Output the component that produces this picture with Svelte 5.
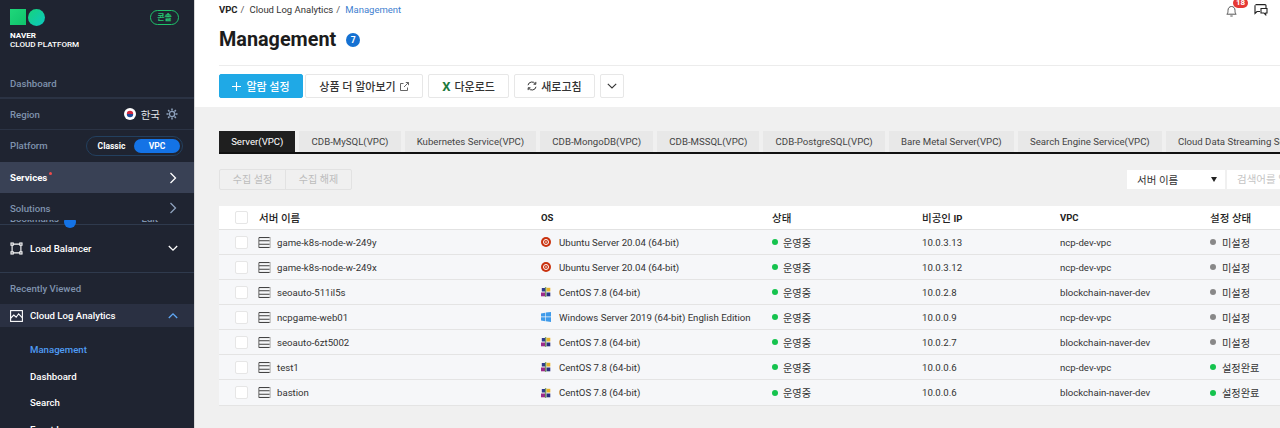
<script lang="ts">
  const tabs = [
    'Server(VPC)', 'CDB-MySQL(VPC)', 'Kubernetes Service(VPC)', 'CDB-MongoDB(VPC)', 'CDB-MSSQL(VPC)',
    'CDB-PostgreSQL(VPC)', 'Bare Metal Server(VPC)', 'Search Engine Service(VPC)', 'Cloud Data Streaming Service(VPC)'
  ];

  const ubuntu = 'Ubuntu Server 20.04 (64-bit)';
  const centos = 'CentOS 7.8 (64-bit)';
  const windows = 'Windows Server 2019 (64-bit) English Edition';

  const servers = [
    { name: 'game-k8s-node-w-249y', icon: 'ubuntu', os: ubuntu, ip: '10.0.3.13', vpc: 'ncp-dev-vpc', done: false },
    { name: 'game-k8s-node-w-249x', icon: 'ubuntu', os: ubuntu, ip: '10.0.3.12', vpc: 'ncp-dev-vpc', done: false },
    { name: 'seoauto-511il5s', icon: 'centos', os: centos, ip: '10.0.2.8', vpc: 'blockchain-naver-dev', done: false },
    { name: 'ncpgame-web01', icon: 'windows', os: windows, ip: '10.0.0.9', vpc: 'ncp-dev-vpc', done: false },
    { name: 'seoauto-6zt5002', icon: 'centos', os: centos, ip: '10.0.2.7', vpc: 'blockchain-naver-dev', done: false },
    { name: 'test1', icon: 'centos', os: centos, ip: '10.0.0.6', vpc: 'ncp-dev-vpc', done: true },
    { name: 'bastion', icon: 'centos', os: centos, ip: '10.0.0.6', vpc: 'blockchain-naver-dev', done: true }
  ];
</script>

<div class="page">
  <aside class="sidebar">
    <div class="brand">
      <div class="brand-top">
        <div class="logo">
          <span class="logo-square"></span>
          <span class="logo-circle"></span>
        </div>
        <span class="pill">콘솔</span>
      </div>
      <div class="brand-name"><b>NAVER</b><br />CLOUD PLATFORM</div>
    </div>

    <div class="side-row dash">Dashboard</div>
    <div class="side-row region">
      <span>Region</span>
      <span class="region-value">
        <svg width="12" height="12" viewBox="0 0 12 12">
          <circle cx="6" cy="6" r="6" fill="#fff" />
          <path d="M2.8 6a3.2 3.2 0 0 1 6.4 0z" fill="#d0263c" />
          <path d="M2.8 6a3.2 3.2 0 0 0 6.4 0z" fill="#1d4a98" />
        </svg>
        <span class="ko">한국</span>
        <svg class="gear" width="12" height="12" viewBox="0 0 12 12" fill="none" stroke="#8ea2bd">
          <circle cx="6" cy="6" r="2.600" stroke-width="1.300" />
          <path stroke-width="1.500" d="M6 .5v2M6 9.500v2M.5 6h2M9.500 6h2M2.100 2.100l1.400 1.400M8.500 8.500l1.400 1.400M2.100 9.900l1.400-1.400M8.500 3.500l1.400-1.400" />
        </svg>
      </span>
    </div>
    <div class="side-row platform">
      <span>Platform</span>
      <span class="switch">
        <span class="opt">Classic</span>
        <span class="opt on">VPC</span>
      </span>
    </div>
    <div class="side-row services">
      <span class="dotted">Services</span>
      <svg width="8" height="12" viewBox="0 0 8 12" fill="none" stroke="#fff" stroke-width="1.3"><path d="M1.5 1l5 5-5 5" /></svg>
    </div>
    <div class="side-row solutions">
      <span>Solutions</span>
      <svg width="8" height="12" viewBox="0 0 8 12" fill="none" stroke="#8ea2bd" stroke-width="1.3"><path d="M1.5 1l5 5-5 5" /></svg>
    </div>

    <div class="side-scroll">
      <div class="side-row bookmarks">
        <span class="bm-label"><span class="bm-text">Bookmarks</span><i class="bm-count"></i></span>
        <span class="bm-text">Edit</span>
      </div>
      <div class="menu-row lb">
        <svg width="13" height="13" viewBox="0 0 13 13" fill="none" stroke="#fff" stroke-width="1.1">
          <rect x="1" y="1" width="2.2" height="2.2" />
          <rect x="9.8" y="1" width="2.2" height="2.2" />
          <rect x="1" y="9.8" width="2.2" height="2.2" />
          <rect x="9.8" y="9.8" width="2.2" height="2.2" />
          <path d="M3.2 2.1h6.6M3.2 10.9h6.6M2.1 3.2v6.6M10.9 3.2v6.6" />
        </svg>
        <span class="menu-label">Load Balancer</span>
        <svg width="10" height="7" viewBox="0 0 10 7" fill="none" stroke="#fff" stroke-width="1.3"><path d="M.8 1l4.2 4.2L9.2 1" /></svg>
      </div>
      <div class="recent">Recently Viewed</div>
      <div class="menu-row current">
        <svg width="13" height="12" viewBox="0 0 13 12" fill="none" stroke="#fff" stroke-width="1.1">
          <rect x=".6" y=".6" width="11.8" height="10.8" />
          <path d="M.8 8l3-3 2.4 2.2 2.4-3.4 3.6 3.8" />
        </svg>
        <span class="menu-label">Cloud Log Analytics</span>
        <svg width="10" height="7" viewBox="0 0 10 7" fill="none" stroke="#5fa8f5" stroke-width="1.3"><path d="M.8 6L5 1.800 9.200 6" /></svg>
      </div>
      <div class="sub active">Management</div>
      <div class="sub">Dashboard</div>
      <div class="sub">Search</div>
      <div class="sub">Event Logs</div>
    </div>
  </aside>

  <main class="main">
    <header class="head">
      <div class="crumb-bar">
        <div class="crumbs">
          <b>VPC</b><span class="sep">/</span><span>Cloud Log Analytics</span><span class="sep">/</span><span class="now">Management</span>
        </div>
        <div class="top-icons">
          <span class="bell">
            <svg width="11" height="12" viewBox="0 0 11 12" fill="none" stroke="#555" stroke-width="1">
              <path d="M.8 9.200c1-.8 1.200-2 1.200-3.800C2 3 3.500 1.500 5.500 1.500S9 3 9 5.400c0 1.800.2 3 1.200 3.800z" />
              <path d="M4.300 11h2.400" />
            </svg>
            <span class="count">18</span>
          </span>
          <svg width="14" height="12" viewBox="0 0 14 12" fill="none" stroke="#222" stroke-width="1.100">
            <path d="M1.500.6h9.500a1 1 0 0 1 1 1V4M6 7.500H3L1 9.500V1.200" />
            <path d="M7 4.500h6v4.500h-1.300v1.800L10 9H7z" />
          </svg>
        </div>
      </div>
      <div class="title-row">
        <h1>Management</h1>
        <span class="badge">7</span>
      </div>
      <div class="actions">
        <button class="btn primary">
          <svg width="9" height="9" viewBox="0 0 9 9" stroke="#fff" stroke-width="1.1"><path d="M4.500 0v9M0 4.500h9" /></svg>
          알람 설정
        </button>
        <button class="btn learn">
          상품 더 알아보기
          <svg width="9" height="9" viewBox="0 0 9 9" fill="none" stroke="#555" stroke-width=".9"><path d="M7.500 5.500v3H.5v-7h3M4 5l4.400-4.400M5.800.5h2.700v2.700" /></svg>
        </button>
        <button class="btn dl">
          <span class="xl">X</span>
          다운로드
        </button>
        <button class="btn refresh">
          <svg width="10" height="10" viewBox="0 0 10 10" fill="none" stroke="#333" stroke-width="1"><path d="M1 4.200A4 4 0 0 1 8.400 3M9 5.800A4 4 0 0 1 1.600 7" /><path d="M8.800 .9v2.300H6.500M1.200 9.100V6.800h2.300" /></svg>
          새로고침
        </button>
        <button class="btn more" aria-label="more">
          <svg width="10" height="6" viewBox="0 0 10 6" fill="none" stroke="#333" stroke-width="1.100"><path d="M.8.8L5 5l4.200-4.200" /></svg>
        </button>
      </div>
    </header>

    <section class="content">
      <div class="tabs">
        {#each tabs as tab, i}
          <div class="tab" class:selected={i === 0}>{tab}</div>
        {/each}
      </div>

      <div class="toolbar">
        <div class="collect">
          <span>수집 설정</span>
          <span>수집 해제</span>
        </div>
        <div class="search">
          <div class="select">서버 이름<i class="caret"></i></div>
          <div class="input">검색어를 입력하세요</div>
        </div>
      </div>

      <div class="table">
        <div class="tr th">
          <span class="check"></span>
          <span>서버 이름</span>
          <span class="lat">OS</span>
          <span>상태</span>
          <span>비공인 <span class="lat">IP</span></span>
          <span class="lat">VPC</span>
          <span>설정 상태</span>
        </div>
        {#each servers as s}
          <div class="tr">
            <span class="check"></span>
            <span class="name">
              <svg width="13" height="11" viewBox="0 0 13 11">
                <rect width="13" height="11" fill="#c9c9c9" />
                <path d="M1 .5h10.500M1 3.800h10.500M1 7.200h10.500M1 10.500h10.500" stroke="#444" stroke-width="1" />
                <path d="M1 1v9.500" stroke="#666" stroke-width="1" />
                <path d="M1.500 2.200h10M1.500 5.500h10M1.500 8.800h10" stroke="#f6f7f9" stroke-width="1.800" />
              </svg>
              {s.name}
            </span>
            <span class="os">
              {#if s.icon === 'ubuntu'}
                <svg width="10" height="10" viewBox="0 0 10 10">
                  <circle cx="5" cy="5" r="5" fill="#c9320f" />
                  <circle cx="5" cy="5" r="2.500" fill="none" stroke="#fff" stroke-width="1" />
                  <circle cx="5" cy="5" r=".8" fill="#fff" />
                </svg>
              {:else if s.icon === 'centos'}
                <svg width="10" height="10" viewBox="0 0 10 10">
                  <rect x="0" y="5.500" width="4.300" height="3.800" fill="#9c2a8a" />
                  <rect x="5.500" y="5.500" width="3.800" height="3.800" fill="#2a2f80" />
                  <rect x=".8" y="1" width="3.500" height="3.500" fill="#2f3a8c" />
                  <rect x="5.500" y=".8" width="3.800" height="3.700" fill="#e8b32a" />
                  <rect x="3.900" y="0" width="1.400" height="10" fill="#3d7a2c" opacity=".65" />
                </svg>
              {:else}
                <svg width="10" height="10" viewBox="0 0 10 10" fill="#3f9bea">
                  <path d="M0 1.400l4.300-.7v3.900H0zM4.900.6L10 0v4.600H4.900zM0 5.300h4.300v3.900L0 8.600zM4.900 5.300H10V10l-5.100-.7z" />
                </svg>
              {/if}
              {s.os}
            </span>
            <span class="state"><i class="dot green"></i>운영중</span>
            <span>{s.ip}</span>
            <span>{s.vpc}</span>
            <span class="state set">
              <i class="dot" class:green={s.done}></i>{s.done ? '설정완료' : '미설정'}
            </span>
          </div>
        {/each}
      </div>
    </section>
  </main>
</div>

<style>
  :global(body) {
    margin: 0;
    background: #fff;
  }

  .page {
    display: flex;
    width: 1280px;
    height: 428px;
    overflow: hidden;
    font-family: Roboto, "Noto Sans CJK KR", sans-serif;
    font-size: 9.650px;
    color: #333;
  }

  /* Sidebar */
  .sidebar {
    flex: none;
    display: flex;
    flex-direction: column;
    width: 194px;
    height: 428px;
    background: #1f2431;
    border-right: 1px solid #d8d8d8;
    color: #fff;
  }

  .brand {
    flex: none;
    height: 67px;
    padding: 9px 15px 0 10px;
    box-sizing: border-box;
  }

  .brand-top {
    display: flex;
    justify-content: space-between;
    align-items: center;
  }

  .logo {
    display: flex;
    gap: 2px;
  }

  .logo-square {
    width: 16px;
    height: 16px;
    background: linear-gradient(135deg, #1fd77a, #0fc36c);
  }

  .logo-circle {
    width: 17px;
    height: 17px;
    border-radius: 50%;
    background: linear-gradient(135deg, #16d47b, #0cc7c0);
  }

  .pill {
    width: 27px;
    height: 13px;
    margin-top: -1px;
    border: 1px solid #1ec46b;
    border-radius: 8px;
    color: #24c873;
    font-size: 8px;
    font-weight: 700;
    line-height: 13px;
    text-align: center;
  }

  .brand-name {
    margin-top: 5px;
    font-size: 8.100px;
    font-weight: 500;
    line-height: 8.500px;
  }

  .side-row {
    flex: none;
    display: flex;
    align-items: center;
    justify-content: space-between;
    box-sizing: border-box;
    padding: 0 16px 0 10px;
    color: #7f93ae;
    font-weight: 500;
  }

  .dash {
    height: 32px;
    padding-top: 2px;
    border-bottom: 2px solid #2b3344;
  }

  .region {
    height: 31px;
    border-bottom: 1px solid #2b3344;
  }

  .region-value {
    display: flex;
    align-items: center;
    gap: 5px;
  }

  .ko {
    color: #e4e8ee;
    font-size: 10.500px;
    font-weight: 400;
    margin-right: 1px;
  }

  .platform {
    height: 32px;
    padding-right: 11px;
    padding-bottom: 1px;
  }

  .switch {
    display: flex;
    align-items: center;
    box-sizing: border-box;
    width: 97px;
    height: 20px;
    padding: 2px;
    border: 1px solid #23405f;
    border-radius: 10px;
    font-size: 8.500px;
    font-weight: 700;
    color: #fff;
  }

  .opt {
    flex: 1;
    height: 100%;
    line-height: 15px;
    text-align: center;
  }

  .opt.on {
    flex: none;
    width: 46px;
    border-radius: 8px;
    background: #1473e6;
  }

  .services {
    height: 31px;
    background: #394155;
    color: #fff;
    font-weight: 700;
    padding-right: 17px;
  }

  .dotted {
    position: relative;
  }

  .dotted::after {
    content: '';
    position: absolute;
    top: 0;
    right: -5px;
    width: 3px;
    height: 3px;
    border-radius: 50%;
    background: #ee4b4b;
  }

  .solutions {
    height: 27px;
    padding-top: 3px;
    padding-right: 17px;
  }

  .side-scroll {
    flex: 1;
    overflow: hidden;
    min-height: 0;
  }

  /* scrolled almost out of view: only the bottom of this row still shows */
  .bookmarks {
    height: 5px;
    border-bottom: 1px solid #2f3a4d;
    padding-right: 36px;
  }

  .bm-label {
    display: flex;
    align-items: center;
    gap: 5px;
  }

  .bm-text {
    margin-bottom: 8px;
  }

  .bm-count {
    width: 12px;
    height: 12px;
    border-radius: 50%;
    background: #1473e6;
  }

  .menu-row {
    display: flex;
    align-items: center;
    padding: 0 16px 0 10px;
    box-sizing: border-box;
    color: #fff;
  }

  .menu-label {
    flex: 1;
    margin-left: 7px;
    font-weight: 500;
  }

  .lb {
    height: 48px;
    border-bottom: 1px solid #2f3a4d;
  }

  .recent {
    height: 31px;
    line-height: 31px;
    padding-left: 10px;
    color: #7f93ae;
    font-weight: 500;
  }

  .current {
    height: 23px;
    background: #2a3042;
  }

  .sub {
    height: 26.500px;
    line-height: 26.500px;
    padding-left: 30px;
    color: #fff;
    font-weight: 500;
  }

  .current + .sub {
    margin-top: 10px;
  }

  .sub.active {
    color: #4f9cf5;
  }

  /* Main */
  .main {
    flex: 1;
    min-width: 0;
    display: flex;
    flex-direction: column;
  }

  .head {
    flex: none;
    height: 107px;
    padding-left: 24px;
    box-sizing: border-box;
    background: #fff;
  }

  .crumb-bar {
    display: flex;
    justify-content: space-between;
    align-items: center;
    height: 19px;
    padding-right: 12px;
    font-size: 9.500px;
  }

  .crumbs b {
    font-weight: 700;
    color: #222;
  }

  .sep {
    margin: 0 5px 0 3px;
    color: #555;
  }

  .now {
    color: #3f7fd0;
  }

  .top-icons {
    display: flex;
    align-items: center;
    gap: 17px;
  }

  .bell {
    position: relative;
    display: flex;
    margin-top: 2px;
  }

  .count {
    position: absolute;
    top: -7px;
    left: 7px;
    width: 15px;
    height: 10px;
    border-radius: 6px;
    background: #e53935;
    color: #fff;
    font-size: 8px;
    font-weight: 700;
    line-height: 10px;
    text-align: center;
  }

  .title-row {
    display: flex;
    align-items: center;
    gap: 10px;
    height: 47px;
    border-bottom: 1px solid #ececec;
    padding-bottom: 5px;
    box-sizing: border-box;
    margin-bottom: 8px;
  }

  h1 {
    margin: 0;
    font-size: 19.800px;
    font-weight: 700;
    color: #1c1c1c;
  }

  .badge {
    width: 14px;
    height: 14px;
    border-radius: 50%;
    background: #1571d2;
    color: #fff;
    font-size: 8.500px;
    font-weight: 700;
    line-height: 14px;
    text-align: center;
  }

  .actions {
    display: flex;
    gap: 5px;
  }

  .btn {
    display: flex;
    align-items: center;
    justify-content: center;
    gap: 4px;
    box-sizing: border-box;
    height: 24px;
    padding: 0;
    border: 1px solid #e7e7e7;
    border-radius: 2px;
    background: #fff;
    color: #333;
    font-family: inherit;
    font-size: 11px;
    font-weight: 500;
  }

  .primary {
    width: 84px;
    margin-right: -3px;
    background: #1fa9e6;
    border-color: #1fa9e6;
    color: #fff;
    gap: 5px;
  }

  .learn { width: 118px; }
  .dl { width: 81px; }
  .refresh { width: 81px; }
  .more { width: 24px; }

  .xl {
    color: #1d7a3d;
    font-size: 13px;
    font-weight: 700;
  }

  .content {
    flex: 1;
    min-height: 0;
    padding: 24px 0 0 24px;
    background: #f0f0f0;
  }

  .tabs {
    display: flex;
    gap: 4px;
    width: 1100px;
    height: 21px;
    border-bottom: 2px solid #111;
  }

  .tab {
    flex: none;
    height: 21px;
    padding: 0 12.130px;
    background: #e8e8e8;
    line-height: 21px;
    white-space: nowrap;
    color: #444;
  }

  .tab.selected {
    background: #1f1f1f;
    color: #fff;
  }

  .toolbar {
    display: flex;
    justify-content: space-between;
    align-items: center;
    width: 1100px;
    height: 21px;
    margin-top: 15px;
  }

  .collect {
    display: flex;
    height: 21px;
    border: 1px solid #e2e2e2;
    border-radius: 2px;
    box-sizing: border-box;
    color: #bcbcbc;
  }

  .collect span {
    width: 65px;
    text-align: center;
    line-height: 19px;
    font-size: 10px;
  }

  .collect span + span {
    border-left: 1px solid #e2e2e2;
  }

  .search {
    display: flex;
    flex: none;
    gap: 2px;
    width: 192px;
    height: 19px;
    font-size: 10.500px;
  }

  .select {
    display: flex;
    align-items: center;
    justify-content: space-between;
    flex: none;
    width: 98px;
    padding: 0 8px 0 10px;
    box-sizing: border-box;
    background: #fff;
    color: #333;
  }

  .caret {
    width: 0;
    height: 0;
    border-left: 3.500px solid transparent;
    border-right: 3.500px solid transparent;
    border-top: 5px solid #222;
  }

  .input {
    flex: 1;
    padding-left: 10px;
    background: #fff;
    color: #c4c4c4;
    line-height: 19px;
    white-space: nowrap;
    overflow: hidden;
  }

  .table {
    width: 1100px;
    margin-top: 16px;
    background: #f6f7f9;
    border-bottom: 1px solid #e4e4e4;
  }

  .tr {
    display: grid;
    grid-template-columns: 40px 282px 231px 150px 138px 150px 109px;
    align-items: center;
    box-sizing: border-box;
    height: 25px;
    border-bottom: 1px solid #e4e4e4;
    white-space: nowrap;
  }

  .tr:last-child {
    border-bottom: none;
  }

  .th {
    height: 24px;
    background: #fff;
    border-bottom: 1px solid #e2e2e2;
    color: #222;
    font-size: 10.500px;
    font-weight: 500;
  }

  .lat {
    font-size: 9.500px;
    font-weight: 700;
  }

  .check {
    justify-self: start;
    width: 11px;
    height: 11px;
    margin-left: 16px;
    border: 1px solid #e6e6e6;
    border-radius: 2px;
    background: #fff;
  }

  .name {
    display: flex;
    align-items: center;
    gap: 6px;
    margin-left: -1px;
  }

  .os {
    display: flex;
    align-items: center;
    gap: 8px;
  }

  .state {
    display: flex;
    align-items: center;
    gap: 5px;
    font-size: 10.200px;
  }

  .set {
    gap: 6px;
  }

  .dot {
    width: 6px;
    height: 6px;
    border-radius: 50%;
    background: #888;
  }

  .dot.green {
    background: #15c34e;
  }
</style>
